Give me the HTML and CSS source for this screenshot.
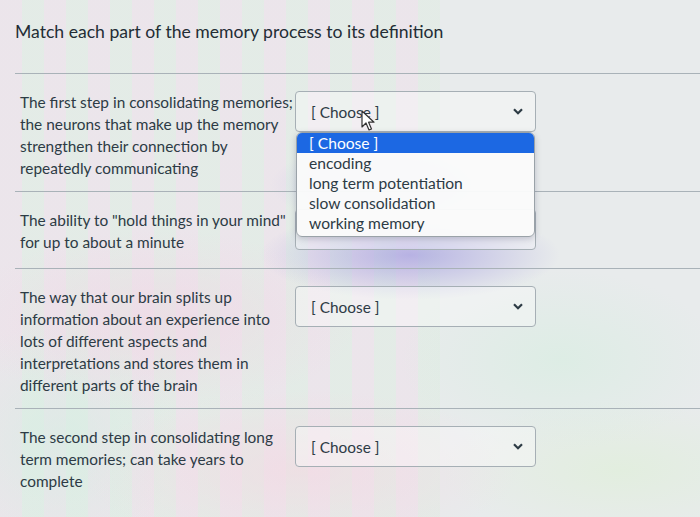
FILE: index.html
```html
<!DOCTYPE html>
<html lang="en">
<head>
    <meta charset="UTF-8">
    <meta name="viewport" content="width=device-width, initial-scale=1.0">
    <title>Quiz question</title>
    <link rel="stylesheet" href="styles.css">
</head>
<body>
    <div class="question">
        <h2 class="question-text">Match each part of the memory process to its definition</h2>

        <div class="answers">
            <div class="answer-row">
                <div class="answer-label">The first step in consolidating memories; the neurons that make up the memory strengthen their connection by repeatedly communicating</div>
                <div class="select-wrap">
                    <div class="select">
                        <span>[ Choose ]</span>
                        <svg class="chevron" viewBox="0 0 10 7" width="10" height="7"><path d="M1 1.2 L5 5.2 L9 1.2" fill="none" stroke="#2d3b45" stroke-width="2.2"/></svg>
                    </div>
                    <!-- open option list -->
                    <ul class="options">
                        <li class="selected">[ Choose ]</li>
                        <li>encoding</li>
                        <li>long term potentiation</li>
                        <li>slow consolidation</li>
                        <li>working memory</li>
                    </ul>
                    <svg class="cursor" viewBox="0 0 14 22" width="14" height="22"><path d="M1 1 L1 17 L5 13 L8 20 L10.5 19 L7.6 12.2 L13 12.2 Z" fill="#fff" stroke="#333" stroke-width="1.2" stroke-linejoin="round"/></svg>
                </div>
            </div>

            <div class="answer-row">
                <div class="answer-label">The ability to "hold things in your mind" for up to about a minute</div>
                <div class="select-wrap">
                    <div class="select select-covered">
                        <span>[ Choose ]</span>
                        <svg class="chevron" viewBox="0 0 10 7" width="10" height="7"><path d="M1 1.2 L5 5.2 L9 1.2" fill="none" stroke="#2d3b45" stroke-width="2.2"/></svg>
                    </div>
                </div>
            </div>

            <div class="answer-row">
                <div class="answer-label">The way that our brain splits up information about an experience into lots of different aspects and interpretations and stores them in different parts of the brain</div>
                <div class="select-wrap">
                    <div class="select">
                        <span>[ Choose ]</span>
                        <svg class="chevron" viewBox="0 0 10 7" width="10" height="7"><path d="M1 1.2 L5 5.2 L9 1.2" fill="none" stroke="#2d3b45" stroke-width="2.2"/></svg>
                    </div>
                </div>
            </div>

            <div class="answer-row">
                <div class="answer-label">The second step in consolidating long term memories; can take years to complete</div>
                <div class="select-wrap">
                    <div class="select">
                        <span>[ Choose ]</span>
                        <svg class="chevron" viewBox="0 0 10 7" width="10" height="7"><path d="M1 1.2 L5 5.2 L9 1.2" fill="none" stroke="#2d3b45" stroke-width="2.2"/></svg>
                    </div>
                </div>
            </div>
        </div>
    </div>
</body>
</html>
```

FILE: styles.css
```css
* {
    margin: 0;
    padding: 0;
    box-sizing: border-box;
    font-family: 'Lato', 'Liberation Sans', sans-serif;
}

body {
    width: 700px;
    height: 517px;
    overflow: hidden;
    color: #2d3b45;
    background-color: #e8ebec;
    background-image:
        radial-gradient(ellipse 150px 45px at 410px 255px, rgba(170, 165, 225, 0.8), transparent),
        radial-gradient(ellipse 110px 40px at 380px 185px, rgba(190, 190, 235, 0.6), transparent),
        radial-gradient(ellipse 200px 90px at 160px 320px, rgba(240, 214, 228, 0.6), transparent),
        radial-gradient(ellipse 160px 90px at 560px 360px, rgba(214, 238, 224, 0.6), transparent),
        radial-gradient(ellipse 220px 80px at 300px 470px, rgba(244, 216, 226, 0.6), transparent),
        radial-gradient(ellipse 180px 70px at 620px 470px, rgba(222, 240, 214, 0.6), transparent),
        radial-gradient(ellipse 120px 120px at 60px 440px, rgba(212, 238, 226, 0.6), transparent),
        repeating-linear-gradient(90deg, rgba(240, 222, 234, 0.45) 0 22px, rgba(222, 236, 224, 0.45) 22px 44px);
    background-size: auto, auto, auto, auto, auto, auto, auto, 440px 100%;
    background-repeat: no-repeat;
}

.question {
    padding: 20px 0 0 15px;
}

.question-text {
    font-size: 17.6px;
    font-weight: 400;
    line-height: 24px;
    color: #232d35;
    padding-bottom: 29px;
    border-bottom: 1px solid #a9b2b8;
}

.answer-row {
    display: grid;
    grid-template-columns: 275px 241px;
    padding: 17px 0 12px 5px;
    border-bottom: 1px solid #a9b2b8;
}

.answer-row:last-child {
    border-bottom: none;
}

.answer-label {
    font-size: 15.4px;
    line-height: 22px;
}

.select-wrap {
    position: relative;
    margin-bottom: 6px;
}

.select {
    height: 41px;
    display: flex;
    align-items: center;
    justify-content: space-between;
    padding: 0 12px 0 15px;
    font-size: 15.4px;
    background: rgba(255, 255, 255, 0.35);
    border: 1px solid #a6afb5;
    border-radius: 4px;
}

/* the open list sits on top of this one */
.select-covered span,
.select-covered .chevron {
    visibility: hidden;
}

.options {
    list-style: none;
    position: absolute;
    top: 41px;
    left: 1px;
    width: 239px;
    padding-bottom: 3px;
    background: rgba(250, 250, 250, 0.97);
    border: 1px solid #9aa2a8;
    border-radius: 6px;
    box-shadow: 0 2px 6px rgba(60, 60, 90, 0.25);
    overflow: hidden;
    z-index: 2;
}

.options li {
    font-size: 15.6px;
    line-height: 20px;
    padding-left: 12px;
}

.options .selected {
    background: #1c68e3;
    color: #fff;
}

.cursor {
    position: absolute;
    left: 66px;
    top: 19px;
    z-index: 3;
}
```
